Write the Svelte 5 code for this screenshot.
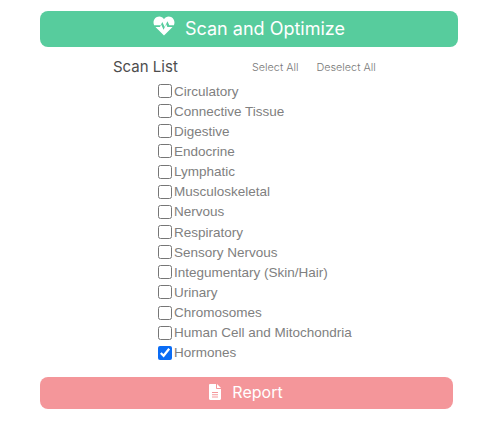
<script>
  const systems = [
    'Circulatory',
    'Connective Tissue',
    'Digestive',
    'Endocrine',
    'Lymphatic',
    'Musculoskeletal',
    'Nervous',
    'Respiratory',
    'Sensory Nervous',
    'Integumentary (Skin/Hair)',
    'Urinary',
    'Chromosomes',
    'Human Cell and Mitochondria',
    'Hormones'
  ];

  let checked = $state({ Hormones: true });

  const selectAll = () => {
    checked = Object.fromEntries(systems.map(s => [s, true]));
  };

  const deselectAll = () => {
    checked = {};
  };
</script>

<main>
  <button class="action scan">
    <svg class="heart" viewBox="0 0 24 22" width="22" height="20">
      <path d="M12 21.5 2.600 12h4.900l1.400-2.600 2.600 5.600 2.900-6 1.300 3h5.700z" fill="#fff" />
      <path d="M1.100 10.200C-.9 5.600 2.200.6 6.700.6 9 .6 10.800 1.800 12 3.600 13.200 1.800 15 .6 17.300.6c4.500 0 7.600 5 5.600 9.600h-5.100l-2-4.400-3.100 6.300-2.500-5.400-1.900 3.500z" fill="#fff" />
    </svg>
    <span>Scan and Optimize</span>
  </button>

  <div class="list-head">
    <h2>Scan List</h2>
    <div class="links">
      <button class="link" onclick={selectAll}>Select All</button>
      <button class="link" onclick={deselectAll}>Deselect All</button>
    </div>
  </div>

  <ul>
    {#each systems as name}
      <li>
        <label>
          <input type="checkbox" bind:checked={checked[name]} />
          <span>{name}</span>
        </label>
      </li>
    {/each}
  </ul>

  <button class="action report">
    <svg class="file" viewBox="0 0 12 16" width="12" height="16">
      <path fill-rule="evenodd" d="M1.200 0H7v4.200c0 .5.3.8.8.8H12v9.800c0 .7-.5 1.200-1.200 1.200H1.200C.5 16 0 15.500 0 14.800V1.200C0 .5.5 0 1.200 0zM3 8v1h6V8zm0 2.200v1h6v-1zm0 2.200v1h6v-1z" fill="#fff" />
      <path d="M8 0l4 4H8z" fill="#fff" />
    </svg>
    <span>Report</span>
  </button>
</main>

<style>
  :global(body) {
    background: #fff;
  }

  main {
    width: 500px;
    height: 438px;
    padding-top: 11px;
    box-sizing: border-box;
    font-family: Inter, "Open Sans", sans-serif;
  }

  .action {
    display: flex;
    align-items: center;
    justify-content: center;
    margin-left: 40px;
    padding: 0 0 2px;
    border: none;
    border-radius: 8px;
    color: #fff;
    cursor: pointer;
    font-family: inherit;
  }

  .scan {
    width: 418px;
    height: 36px;
    gap: 10px;
    background: #57cc9d;
    font-size: 18px;
  }

  .heart {
    margin-top: -4px;
  }

  .report {
    width: 413px;
    height: 32px;
    gap: 11px;
    margin-top: 14px;
    padding-right: 1px;
    background: #f4969a;
    font-size: 16px;
  }

  .list-head {
    display: flex;
    align-items: center;
    margin: 10px 0 0 113px;
    height: 18px;
  }

  h2 {
    width: 139px;
    margin: 0;
    color: #4d4d4d;
    font-size: 15px;
    font-weight: 400;
  }

  .links {
    display: flex;
    gap: 18px;
    margin-top: 2px;
  }

  .link {
    padding: 0;
    border: none;
    background: none;
    color: #777;
    font-family: inherit;
    font-size: 10.800px;
    font-weight: 300;
    cursor: pointer;
  }

  ul {
    margin: 6px 0 0 158px;
    padding: 0;
    list-style: none;
  }

  li {
    height: 20.150px;
  }

  label {
    display: flex;
    align-items: center;
    height: 100%;
    color: #808080;
    font-family: "Liberation Sans", Arial, sans-serif;
    font-size: 13.500px;
  }

  input {
    width: 14px;
    height: 14px;
    margin: 0 2px 0 0;
    accent-color: #0a6cf5;
  }
</style>
